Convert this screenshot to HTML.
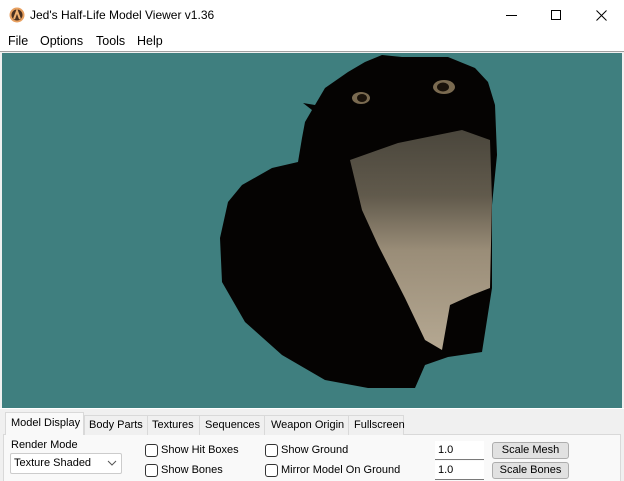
<!DOCTYPE html>
<html><head><style>
*{margin:0;padding:0;box-sizing:border-box}
body{width:624px;height:481px;overflow:hidden;background:#f0f0f0;font-family:"Liberation Sans",sans-serif;font-size:11px;color:#000;position:relative}
.a{position:absolute;white-space:nowrap}
.cb{position:absolute;width:13px;height:13px;border:1px solid #333;border-radius:3px;background:#fff}
.btn{position:absolute;border:1px solid #adadad;background:#e1e1e1;border-radius:3px;text-align:center;font-size:11px;line-height:15px}
.ed{position:absolute;background:#fff;border-bottom:1px solid #7a7a7a;font-size:11px;padding-left:3px;line-height:18px}
</style></head><body>
<div class="a" style="left:0;top:0;width:624px;height:30px;background:#fff"></div>
<svg class="a" style="left:9px;top:7px" width="16" height="16"><circle cx="8" cy="8" r="7.5" fill="#e8a060"/><circle cx="8" cy="8" r="5.5" fill="#4a3020"/><path d="M5 12 L8 4 L11 12" stroke="#f0b070" stroke-width="2" fill="none"/></svg>
<div class="a" style="left:30px;top:8px;font-size:12px">Jed's Half-Life Model Viewer v1.36</div>
<div class="a" style="left:506px;top:15px;width:11px;height:1px;background:#000"></div>
<div class="a" style="left:551px;top:10px;width:10px;height:10px;border:1px solid #000"></div>
<svg class="a" style="left:596px;top:10px" width="11" height="11"><path d="M0.5 0.5 L10.5 10.5 M10.5 0.5 L0.5 10.5" stroke="#000" stroke-width="1"/></svg>
<div class="a" style="left:0;top:30px;width:624px;height:21px;background:#fff"></div>
<div class="a" style="left:8px;top:34px;font-size:12.5px">File</div>
<div class="a" style="left:40px;top:34px;font-size:12.5px">Options</div>
<div class="a" style="left:96px;top:34px;font-size:12.5px">Tools</div>
<div class="a" style="left:137px;top:34px;font-size:12.5px">Help</div>
<div class="a" style="left:0;top:51px;width:624px;height:359px;background:#f0f0f0;border-top:1px solid #a0a0a0"></div>
<svg class="a" style="left:2px;top:53px" width="620" height="355" viewBox="2 53 620 355">
<rect x="2" y="53" width="620" height="355" fill="#3f7f7f"/>
<polygon fill="#050302" points="382,55 402,57 448,57 475,68 488,82 495,105 497,155 492,205 492,288 482,352 448,357 425,365 415,388 368,388 325,380 282,355 245,322 222,282 220,238 228,202 242,185 272,168 298,162 302,138 305,122 312,110 303,103 315,105 325,88 348,72 365,62"/>
<defs><linearGradient id="g" x1="0" y1="0" x2="0" y2="1"><stop offset="0" stop-color="#4a463c"/><stop offset="0.3" stop-color="#615a4c"/><stop offset="0.55" stop-color="#9a8d78"/><stop offset="1" stop-color="#b5a892"/></linearGradient></defs>
<polygon fill="url(#g)" points="350,160 398,143 462,130 490,140 492,200 490,288 472,295 450,305 442,350 425,340 405,298 378,245 362,210"/>
<ellipse cx="361" cy="98" rx="9" ry="6" fill="#7a6a50"/><ellipse cx="362" cy="98" rx="5" ry="4" fill="#1a120a"/>
<ellipse cx="444" cy="87" rx="11" ry="7" fill="#7a6a50"/><ellipse cx="443" cy="87" rx="6" ry="4.5" fill="#1a120a"/>
</svg>
<div class="a" style="left:0;top:408px;width:624px;height:2px;background:#f0f0f0;border-top:1px solid #fff"></div>
<div class="a" style="left:3px;top:434px;width:618px;height:47px;border:1px solid #d9d9d9;border-bottom:none;background:#f9f9f9"></div>
<div class="a" style="left:5px;top:412px;width:79px;height:23px;background:#f9f9f9;border:1px solid #d9d9d9;border-bottom:none"></div>
<div class="a" style="left:11px;top:417px">Model Display</div>
<div class="a" style="left:84px;top:415px;width:320px;height:20px;border:1px solid #d9d9d9;border-bottom:none;background:#f0f0f0"></div>
<div class="a" style="left:89px;top:419px">Body Parts</div>
<div class="a" style="left:147px;top:416px;width:1px;height:19px;background:#d9d9d9"></div>
<div class="a" style="left:152px;top:419px">Textures</div>
<div class="a" style="left:199px;top:416px;width:1px;height:19px;background:#d9d9d9"></div>
<div class="a" style="left:205px;top:419px">Sequences</div>
<div class="a" style="left:264px;top:416px;width:1px;height:19px;background:#d9d9d9"></div>
<div class="a" style="left:271px;top:419px">Weapon Origin</div>
<div class="a" style="left:348px;top:416px;width:1px;height:19px;background:#d9d9d9"></div>
<div class="a" style="left:354px;top:419px">Fullscreen</div>
<div class="a" style="left:11px;top:439px">Render Mode</div>
<div class="a" style="left:10px;top:453px;width:112px;height:21px;border:1px solid #ccc;border-radius:2px;background:#fff"></div>
<div class="a" style="left:14px;top:457px">Texture Shaded</div>
<svg class="a" style="left:107px;top:460px" width="10" height="6"><path d="M1 1 L5 5 L9 1" stroke="#555" fill="none"/></svg>
<div class="cb" style="left:145px;top:444px"></div><div class="a" style="left:161px;top:444px">Show Hit Boxes</div>
<div class="cb" style="left:145px;top:464px"></div><div class="a" style="left:161px;top:464px">Show Bones</div>
<div class="cb" style="left:265px;top:444px"></div><div class="a" style="left:281px;top:444px">Show Ground</div>
<div class="cb" style="left:265px;top:464px"></div><div class="a" style="left:281px;top:464px">Mirror Model On Ground</div>
<div class="ed" style="left:435px;top:441px;width:49px;height:19px">1.0</div>
<div class="ed" style="left:435px;top:461px;width:49px;height:19px">1.0</div>
<div class="btn" style="left:492px;top:442px;width:77px;height:17px">Scale Mesh</div>
<div class="btn" style="left:492px;top:462px;width:77px;height:17px">Scale Bones</div>
</body></html>
